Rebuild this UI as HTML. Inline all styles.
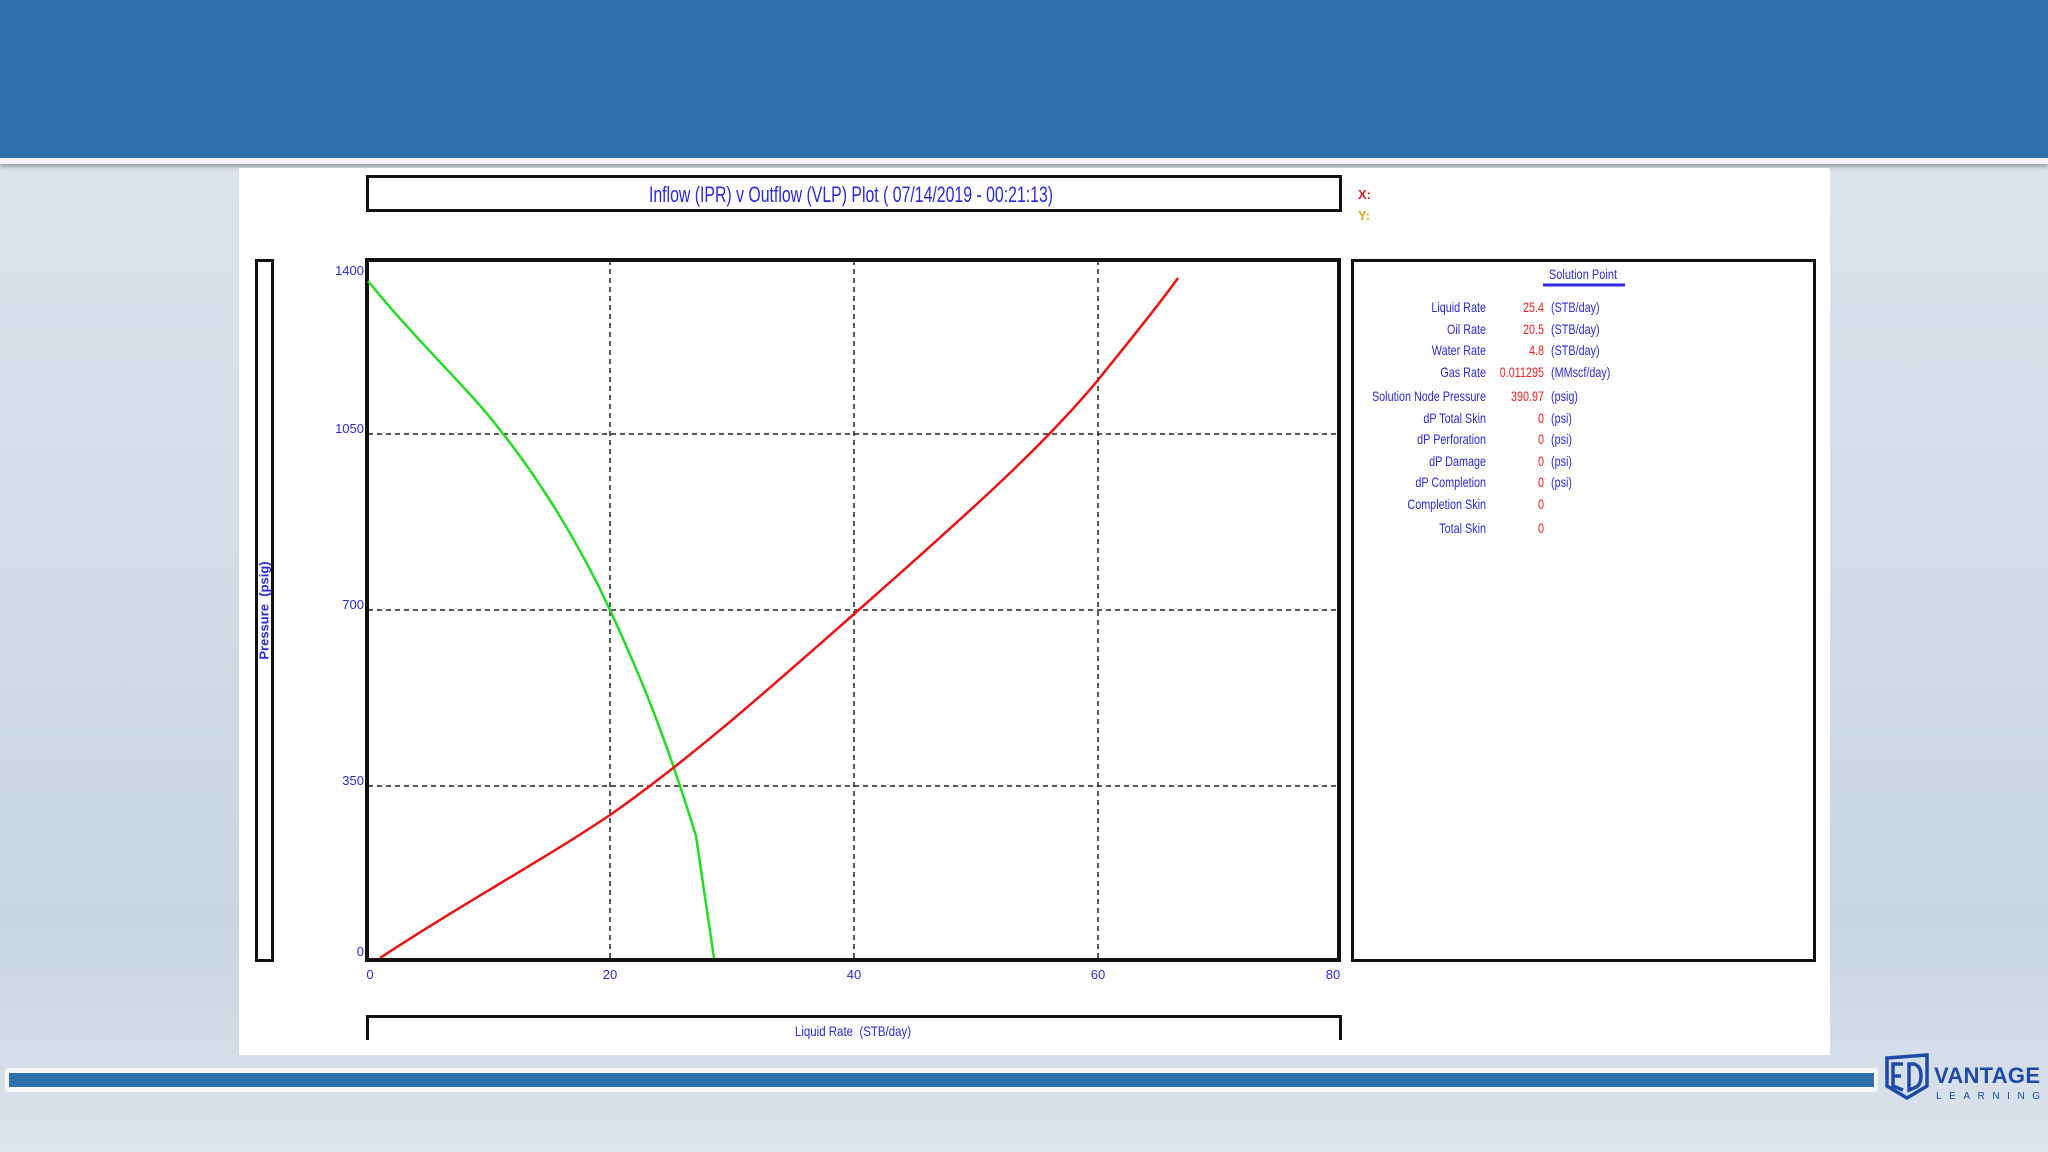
<!DOCTYPE html>
<html><head><meta charset="utf-8"><style>
body{margin:0;width:2048px;height:1152px;overflow:hidden;background:linear-gradient(180deg,#dfe6ee 0%,#d3dde8 50%,#c9d5e2 80%,#dce4ec 100%);font-family:"Liberation Sans",sans-serif;position:relative}
.a{position:absolute}
.t{color:#2a2ad8;font-size:14px;white-space:nowrap;transform-origin:left top}
</style></head><body>
<div class="a" style="left:0;top:0;width:2048px;height:158px;background:#2e71ad;border-bottom:6px solid #f2f4f7;box-shadow:0 3px 4px rgba(0,0,0,.3)"></div>
<div class="a" style="left:239px;top:168px;width:1591px;height:887px;background:#fff"></div>
<div class="a" style="left:366px;top:175px;width:970px;height:31px;border:3px solid #111;background:#fff"></div>
<div class="a t" style="left:851px;top:182px;font-size:22px;transform:translateX(-50%) scaleX(.72);transform-origin:center top">Inflow (IPR) v Outflow (VLP) Plot ( 07/14/2019 - 00:21:13)</div>
<div class="a" style="left:1358px;top:187px;color:#e02020;font-size:13px;font-weight:bold">X:</div>
<div class="a" style="left:1358px;top:208px;color:#e0a020;font-size:13px;font-weight:bold">Y:</div>
<div class="a" style="left:255px;top:259px;width:13px;height:697px;border:3px solid #111"></div>
<div class="a" style="left:255px;top:600px;width:19px;height:20px;display:flex;align-items:center;justify-content:center">
<div class="t" style="font-size:13px;font-weight:bold;transform:rotate(-90deg);transform-origin:center">Pressure&nbsp;&nbsp;(psig)</div></div>
<div class="a" style="left:1351px;top:259px;width:459px;height:697px;border:3px solid #111"></div>
<div class="a" style="left:366px;top:1015px;width:970px;height:22px;border:3px solid #111;border-bottom:none"></div>
<div class="a t" style="left:853px;top:1023px;font-size:14px;transform:translateX(-50%) scaleX(.82);transform-origin:center top">Liquid Rate&nbsp;&nbsp;(STB/day)</div>
<svg class="a" style="left:0;top:0" width="2048" height="1152">
<g stroke="#222" stroke-width="1.5" stroke-dasharray="5,4">
<line x1="610" y1="260" x2="610" y2="958"/><line x1="854" y1="260" x2="854" y2="958"/><line x1="1098" y1="260" x2="1098" y2="958"/>
<line x1="368" y1="434" x2="1338" y2="434"/><line x1="368" y1="610" x2="1338" y2="610"/><line x1="368" y1="786" x2="1338" y2="786"/>
</g>
<rect x="367" y="260" width="972" height="700" fill="none" stroke="#111" stroke-width="4"/>
<path fill="none" stroke="#22dd22" stroke-width="2.5" d="M368 281 C420 345 470 390 500 430 C540 480 580 545 610 610 C640 675 665 735 696 836 L714 958"/>
<path fill="none" stroke="#ee1111" stroke-width="2.5" d="M380 958 C460 905 540 862 610 815 C700 752 790 670 870 600 C960 520 1040 450 1098 380 C1130 340 1155 310 1178 278"/>
<g fill="#2a2ad8" font-size="13" font-family="Liberation Sans">
<text x="364" y="275" text-anchor="end">1400</text><text x="364" y="433" text-anchor="end">1050</text><text x="364" y="609" text-anchor="end">700</text><text x="364" y="785" text-anchor="end">350</text><text x="364" y="956" text-anchor="end">0</text>
<text x="370" y="979" text-anchor="middle">0</text><text x="610" y="979" text-anchor="middle">20</text><text x="854" y="979" text-anchor="middle">40</text><text x="1098" y="979" text-anchor="middle">60</text><text x="1333" y="979" text-anchor="middle">80</text>
</g>
<g font-size="13.5" font-family="Liberation Sans">
<text x="1583" y="279" text-anchor="middle" fill="#2a2ad8" transform="translate(1583 0) scale(.82 1) translate(-1583 0)">Solution Point</text>
<line x1="1543" y1="285" x2="1625" y2="285" stroke="#2a2ad8" stroke-width="3"/>
<g fill="#2a2ad8" text-anchor="end" transform="translate(1486 0) scale(.8 1) translate(-1486 0)">
<text x="1486" y="312">Liquid Rate</text><text x="1486" y="334">Oil Rate</text><text x="1486" y="355">Water Rate</text><text x="1486" y="377">Gas Rate</text><text x="1486" y="401">Solution Node Pressure</text><text x="1486" y="423">dP Total Skin</text><text x="1486" y="444">dP Perforation</text><text x="1486" y="466">dP Damage</text><text x="1486" y="487">dP Completion</text><text x="1486" y="509">Completion Skin</text><text x="1486" y="533">Total Skin</text>
</g>
<g fill="#ee2020" text-anchor="end" transform="translate(1544 0) scale(.8 1) translate(-1544 0)">
<text x="1544" y="312">25.4</text><text x="1544" y="334">20.5</text><text x="1544" y="355">4.8</text><text x="1544" y="377">0.011295</text><text x="1544" y="401">390.97</text><text x="1544" y="423">0</text><text x="1544" y="444">0</text><text x="1544" y="466">0</text><text x="1544" y="487">0</text><text x="1544" y="509">0</text><text x="1544" y="533">0</text>
</g>
<g fill="#2a2ad8" transform="translate(1551 0) scale(.8 1) translate(-1551 0)">
<text x="1551" y="312">(STB/day)</text><text x="1551" y="334">(STB/day)</text><text x="1551" y="355">(STB/day)</text><text x="1551" y="377">(MMscf/day)</text><text x="1551" y="401">(psig)</text><text x="1551" y="423">(psi)</text><text x="1551" y="444">(psi)</text><text x="1551" y="466">(psi)</text><text x="1551" y="487">(psi)</text>
</g></g>
<rect x="5" y="1068" width="1873" height="24" rx="3" fill="#f4f6f8"/>
<rect x="9" y="1073" width="1865" height="14" fill="#2d6eac"/>
<g fill="none" stroke="#1d4aa8" stroke-width="3.5">
<path d="M1887 1058 L1927 1055 L1927 1086 L1907 1098 L1887 1086 Z"/>
<path d="M1903 1064 L1893 1064 L1893 1086 L1903 1090 M1893 1076 L1901 1076 M1909 1064 L1914 1064 Q1921 1066 1921 1076 Q1921 1086 1914 1088 L1909 1090 Z"/>
</g>
<text x="1934" y="1083" fill="#1d4aa8" font-size="22" font-weight="bold" font-family="Liberation Sans" textLength="106" lengthAdjust="spacing">VANTAGE</text>
<text x="1936" y="1099" fill="#1d4aa8" font-size="10" font-family="Liberation Sans" textLength="104" lengthAdjust="spacing">LEARNING</text>
</svg>
</body></html>
